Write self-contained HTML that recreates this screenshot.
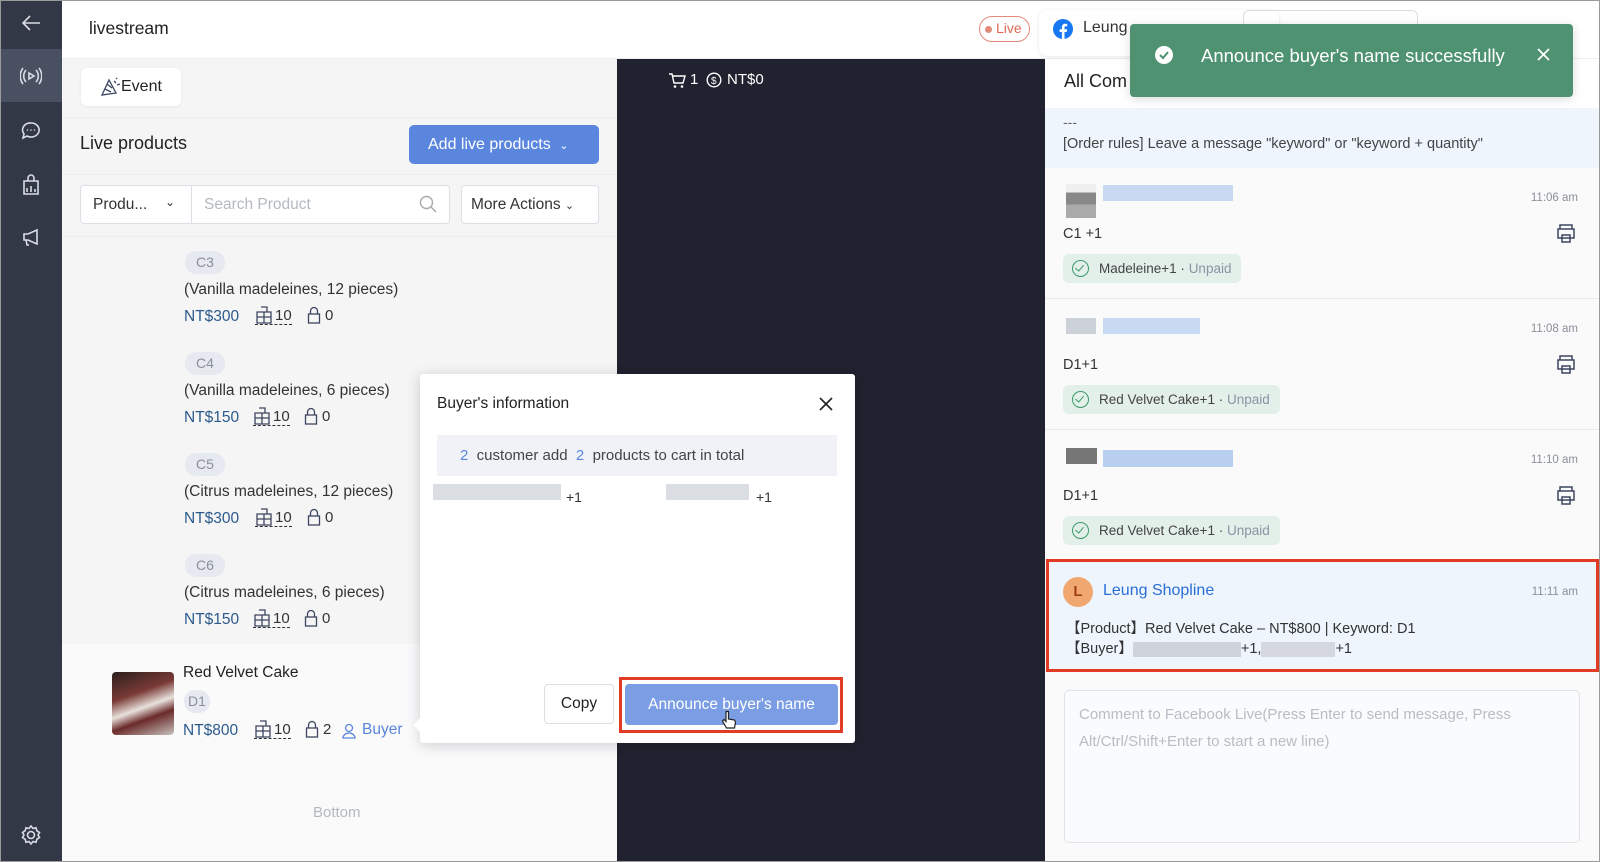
<!DOCTYPE html>
<html><head><meta charset="utf-8"><style>
*{box-sizing:border-box;margin:0;padding:0}
body{width:1600px;height:862px;overflow:hidden;font-family:"Liberation Sans",sans-serif;background:#fff;position:relative;color:#222}
.a{position:absolute}
.side{left:0;top:0;width:62px;height:862px;background:#323846}
.ico{stroke:#d8dce4;fill:none;stroke-width:1.6}
.chip{background:#e6e9ef;border-radius:11px;color:#8a8f99;font-size:14px;text-align:center;line-height:23px;width:40px;height:23px}
.txt{font-size:15.5px;color:#333}
.price{font-size:15.5px;color:#2c5a8c}
.st{font-size:15px;color:#333}
.blur{background:#d5d8dd}
.cmt{left:1045px;width:555px;height:131px;border-bottom:1px solid #e6e9ef;background:#fafafa}
.tag{background:#e3efe9;border-radius:6px;height:29px;font-size:13.5px;line-height:29px;color:#444;padding:0 10px 0 36px}
.tag i{position:absolute;left:9px;top:6px;width:17px;height:17px;border:1.6px solid #3a9a68;border-radius:50%}
.tag i:after{content:"";position:absolute;left:4px;top:2px;width:4px;height:7px;border-right:1.6px solid #3a9a68;border-bottom:1.6px solid #3a9a68;transform:rotate(40deg)}
.tag span{color:#8a94a6}
.time{font-size:11.5px;color:#8a8f99;right:22px}
</style></head><body>
<!-- sidebar -->
<div class="a side"></div>
<div class="a" style="left:0;top:49px;width:62px;height:53px;background:#485062"></div>
<svg class="a" style="left:20px;top:13px" width="22" height="20"><path class="ico" d="M20 10H3M10 3L3 10L10 17" stroke-width="2"/></svg>
<svg class="a" style="left:20px;top:67px" width="22" height="18"><path class="ico" d="M6 3a9 9 0 0 0 0 12M16 3a9 9 0 0 1 0 12M3 1a13 13 0 0 0 0 16M19 1a13 13 0 0 1 0 16M9 6v6l5-3z"/></svg>
<svg class="a" style="left:21px;top:121px" width="20" height="20"><path class="ico" d="M10 2a8 7 0 1 1-4 13l-4 2 1-4A8 7 0 0 1 10 2z"/><circle cx="6.5" cy="9" r=".8" fill="#d8dce4"/><circle cx="10" cy="9" r=".8" fill="#d8dce4"/><circle cx="13.5" cy="9" r=".8" fill="#d8dce4"/></svg>
<svg class="a" style="left:21px;top:174px" width="20" height="22"><path class="ico" d="M3 7h14v13H3zM7 7V4a3 3 0 0 1 6 0v3M6 18v-4M10 18v-6M14 18v-3"/></svg>
<svg class="a" style="left:21px;top:227px" width="20" height="20"><path class="ico" d="M3 7h4l9-4v14l-9-4H3zM5 13l1 5h2"/></svg>
<svg class="a" style="left:20px;top:824px" width="22" height="22"><circle class="ico" cx="11" cy="11" r="3.5"/><path class="ico" d="M11 2l2 2.5 3-.8.8 3 2.7 1.8-1.5 2.5 1.5 2.5-2.7 1.8-.8 3-3-.8L11 20l-2-2.5-3 .8-.8-3L2.5 13.5 4 11 2.5 8.5 5.2 6.7 6 3.7l3 .8z"/></svg>

<!-- header -->
<div class="a" style="left:62px;top:0;width:1538px;height:59px;background:#fff;border-bottom:1px solid #eee"></div>
<div class="a" style="left:89px;top:18px;font-size:17.5px;color:#222">livestream</div>
<div class="a" style="left:979px;top:16px;width:51px;height:26px;border:1.5px solid #e48a78;border-radius:13px;color:#e06a55;font-size:14px;line-height:23px;padding-left:16px">Live</div>
<div class="a" style="left:985px;top:26px;width:7px;height:7px;border-radius:50%;background:#e48a78"></div>
<div class="a" style="left:1039px;top:10px;width:240px;height:46px;background:#fff;border-radius:8px;box-shadow:0 1px 4px rgba(0,0,0,.1)"></div>
<svg class="a" style="left:1052px;top:18px" width="22" height="22"><circle cx="11" cy="11" r="10" fill="#1877f2"/><path d="M12.5 21v-7h2.3l.4-2.7h-2.7V9.6c0-.8.3-1.3 1.4-1.3h1.4V5.9a18 18 0 0 0-2-.1c-2 0-3.4 1.2-3.4 3.5v2H7.6V14h2.3v7z" fill="#fff"/></svg>
<div class="a" style="left:1083px;top:19px;font-size:16px;color:#333">Leung</div>
<div class="a" style="left:1243px;top:10px;width:175px;height:40px;border:1px solid #ddd;border-radius:6px"></div>

<!-- left panel -->
<div class="a" style="left:62px;top:59px;width:555px;height:803px;background:#f5f5f6"></div>
<div class="a" style="left:81px;top:68px;width:100px;height:38px;background:#fff;border-radius:6px;box-shadow:0 1px 3px rgba(0,0,0,.06)"></div>
<svg class="a" style="left:100px;top:77px" width="22" height="20"><path d="M2 18L9 3l7 13zM5 12l6 3M7 7l5 4M14 4l2 2M17 8l3-1M16 2l1-1" stroke="#3d4660" stroke-width="1.3" fill="none"/></svg>
<div class="a" style="left:121px;top:78px;font-size:16px;color:#222">Event</div>
<div class="a" style="left:62px;top:117px;width:555px;height:1px;background:#ececec"></div>
<div class="a" style="left:80px;top:133px;font-size:18px;color:#222">Live products</div>
<div class="a" style="left:409px;top:125px;width:190px;height:39px;background:#5a86dd;border-radius:5px;color:#fff;font-size:16px;line-height:39px;padding-left:19px">Add live products <span style="font-size:11px;margin-left:4px">&#8964;</span></div>
<div class="a" style="left:62px;top:174px;width:555px;height:1px;background:#ececec"></div>
<div class="a" style="left:80px;top:185px;width:370px;height:39px;background:#fff;border:1px solid #dcdfe6;border-radius:4px"></div>
<div class="a" style="left:191px;top:185px;width:1px;height:39px;background:#dcdfe6"></div>
<div class="a" style="left:93px;top:196px;font-size:15.5px;color:#333">Produ...</div>
<div class="a" style="left:165px;top:195px;font-size:12px;color:#333">&#8964;</div>
<div class="a" style="left:204px;top:196px;font-size:15.5px;color:#b4b8c0">Search Product</div>
<svg class="a" style="left:419px;top:195px" width="18" height="18"><circle cx="7.5" cy="7.5" r="6" stroke="#aaa" stroke-width="1.4" fill="none"/><path d="M12 12l5 5" stroke="#aaa" stroke-width="1.4"/></svg>
<div class="a" style="left:461px;top:185px;width:138px;height:39px;background:#fff;border:1px solid #dcdfe6;border-radius:4px;font-size:15.5px;line-height:37px;padding-left:9px;color:#333">More Actions <span style="font-size:11px">&#8964;</span></div>
<div class="a" style="left:62px;top:236px;width:555px;height:1px;background:#eee"></div>

<!-- product items -->
<div class="a chip" style="left:185px;top:251px">C3</div>
<div class="a txt" style="left:184px;top:281px">(Vanilla madeleines, 12 pieces)</div>
<div class="a price" style="left:184px;top:308px">NT$300</div>
<div class="a st" style="left:255px;top:307px;border-bottom:1.5px dashed #333;padding-left:20px">10</div>
<div class="a st" style="left:307px;top:307px;padding-left:18px">0</div>

<div class="a chip" style="left:185px;top:352px">C4</div>
<div class="a txt" style="left:184px;top:382px">(Vanilla madeleines, 6 pieces)</div>
<div class="a price" style="left:184px;top:409px">NT$150</div>
<div class="a st" style="left:253px;top:408px;border-bottom:1.5px dashed #333;padding-left:20px">10</div>
<div class="a st" style="left:304px;top:408px;padding-left:18px">0</div>

<div class="a chip" style="left:185px;top:453px">C5</div>
<div class="a txt" style="left:184px;top:483px">(Citrus madeleines, 12 pieces)</div>
<div class="a price" style="left:184px;top:510px">NT$300</div>
<div class="a st" style="left:255px;top:509px;border-bottom:1.5px dashed #333;padding-left:20px">10</div>
<div class="a st" style="left:307px;top:509px;padding-left:18px">0</div>

<div class="a chip" style="left:185px;top:554px">C6</div>
<div class="a txt" style="left:184px;top:584px">(Citrus madeleines, 6 pieces)</div>
<div class="a price" style="left:184px;top:611px">NT$150</div>
<div class="a st" style="left:253px;top:610px;border-bottom:1.5px dashed #333;padding-left:20px">10</div>
<div class="a st" style="left:304px;top:610px;padding-left:18px">0</div>

<div class="a" style="left:62px;top:644px;width:555px;height:218px;background:#fafafb"></div>
<div class="a" style="left:112px;top:672px;width:62px;height:63px;border-radius:4px;background:linear-gradient(160deg,#2a1f1d 0%,#7a3a36 35%,#e8e2dc 55%,#6b2a2a 70%,#c7c2bd 100%)"></div>
<div class="a" style="left:183px;top:664px;font-size:15.5px;color:#222">Red Velvet Cake</div>
<div class="a chip" style="left:184px;top:690px;width:26px">D1</div>
<div class="a price" style="left:183px;top:722px">NT$800</div>
<div class="a st" style="left:254px;top:721px;border-bottom:1.5px dashed #333;padding-left:20px">10</div>
<div class="a st" style="left:305px;top:721px;padding-left:18px">2</div>
<div class="a" style="left:341px;top:721px;font-size:15.5px;color:#5a86dd;padding-left:21px">Buyer</div>
<svg class="a" style="left:342px;top:723px" width="14" height="16"><circle cx="7" cy="5" r="3.5" stroke="#5a86dd" stroke-width="1.3" fill="none"/><path d="M1 15a6 5 0 0 1 12 0z" stroke="#5a86dd" stroke-width="1.3" fill="none"/></svg>
<div class="a" style="left:313px;top:804px;font-size:15px;color:#b4b8c0">Bottom</div>
<svg class="a" style="left:255px;top:305px" width="18" height="20"><path d="M2 7h14v11H2zM6 2h6v5M2 12h14M9 7v11" stroke="#3d4660" stroke-width="1.3" fill="none"/></svg>
<svg class="a" style="left:307px;top:306px" width="14" height="18"><rect x="1.5" y="8" width="11" height="9" stroke="#3d4660" stroke-width="1.3" fill="none"/><path d="M3.5 8V5a3.5 3.5 0 0 1 7 0v3" stroke="#3d4660" stroke-width="1.3" fill="none"/></svg>
<svg class="a" style="left:253px;top:406px" width="18" height="20"><path d="M2 7h14v11H2zM6 2h6v5M2 12h14M9 7v11" stroke="#3d4660" stroke-width="1.3" fill="none"/></svg>
<svg class="a" style="left:304px;top:407px" width="14" height="18"><rect x="1.5" y="8" width="11" height="9" stroke="#3d4660" stroke-width="1.3" fill="none"/><path d="M3.5 8V5a3.5 3.5 0 0 1 7 0v3" stroke="#3d4660" stroke-width="1.3" fill="none"/></svg>
<svg class="a" style="left:255px;top:507px" width="18" height="20"><path d="M2 7h14v11H2zM6 2h6v5M2 12h14M9 7v11" stroke="#3d4660" stroke-width="1.3" fill="none"/></svg>
<svg class="a" style="left:307px;top:508px" width="14" height="18"><rect x="1.5" y="8" width="11" height="9" stroke="#3d4660" stroke-width="1.3" fill="none"/><path d="M3.5 8V5a3.5 3.5 0 0 1 7 0v3" stroke="#3d4660" stroke-width="1.3" fill="none"/></svg>
<svg class="a" style="left:253px;top:608px" width="18" height="20"><path d="M2 7h14v11H2zM6 2h6v5M2 12h14M9 7v11" stroke="#3d4660" stroke-width="1.3" fill="none"/></svg>
<svg class="a" style="left:304px;top:609px" width="14" height="18"><rect x="1.5" y="8" width="11" height="9" stroke="#3d4660" stroke-width="1.3" fill="none"/><path d="M3.5 8V5a3.5 3.5 0 0 1 7 0v3" stroke="#3d4660" stroke-width="1.3" fill="none"/></svg>
<svg class="a" style="left:254px;top:719px" width="18" height="20"><path d="M2 7h14v11H2zM6 2h6v5M2 12h14M9 7v11" stroke="#3d4660" stroke-width="1.3" fill="none"/></svg>
<svg class="a" style="left:305px;top:720px" width="14" height="18"><rect x="1.5" y="8" width="11" height="9" stroke="#3d4660" stroke-width="1.3" fill="none"/><path d="M3.5 8V5a3.5 3.5 0 0 1 7 0v3" stroke="#3d4660" stroke-width="1.3" fill="none"/></svg>

<!-- video -->
<div class="a" style="left:617px;top:59px;width:428px;height:803px;background:#20222f"></div>
<svg class="a" style="left:668px;top:72px" width="18" height="17"><path d="M1 2h3l2 9h9l2-7H5" stroke="#fff" stroke-width="1.4" fill="none"/><circle cx="7" cy="14.5" r="1.3" fill="#fff"/><circle cx="14" cy="14.5" r="1.3" fill="#fff"/></svg>
<div class="a" style="left:690px;top:71px;font-size:15px;color:#fff">1</div>
<svg class="a" style="left:706px;top:72px" width="16" height="16"><circle cx="8" cy="8" r="6.8" stroke="#fff" stroke-width="1.4" fill="none"/><text x="5" y="12" font-size="10" fill="#fff" font-family="Liberation Sans">$</text></svg>
<div class="a" style="left:727px;top:71px;font-size:15px;color:#fff">NT$0</div>

<!-- right panel -->
<div class="a" style="left:1045px;top:59px;width:555px;height:803px;background:#fafafa"></div>
<div class="a" style="left:1045px;top:59px;width:555px;height:50px;background:#fff"></div>
<div class="a" style="left:1064px;top:71px;font-size:18px;color:#222">All Com</div>
<div class="a" style="left:1045px;top:108px;width:555px;height:60px;background:#eef5fd"></div>
<div class="a" style="left:1063px;top:114px;font-size:14px;color:#666">---</div>
<div class="a" style="left:1063px;top:136px;font-size:14.5px;color:#444">[Order rules] Leave a message "keyword" or "keyword + quantity"</div>

<div class="a cmt" style="top:168px"></div>
<div class="a blur" style="left:1066px;top:184px;width:30px;height:34px;background:linear-gradient(#f0f0f0 25%,#888 25%,#888 60%,#aaa 60%)"></div>
<div class="a" style="left:1103px;top:185px;width:130px;height:16px;background:#c8d9f2"></div>
<div class="a time" style="top:192px">11:06 am</div>
<div class="a" style="left:1063px;top:226px;font-size:14.5px;color:#333">C1 +1</div>
<div class="a tag" style="left:1063px;top:254px"><i></i>Madeleine+1 · <span>Unpaid</span></div>

<div class="a cmt" style="top:299px"></div>
<div class="a" style="left:1066px;top:318px;width:30px;height:16px;background:#cdd1d8"></div>
<div class="a" style="left:1103px;top:318px;width:97px;height:16px;background:#c8d9f2"></div>
<div class="a time" style="top:323px">11:08 am</div>
<div class="a" style="left:1063px;top:357px;font-size:14.5px;color:#333">D1+1</div>
<div class="a tag" style="left:1063px;top:385px"><i></i>Red Velvet Cake+1 · <span>Unpaid</span></div>

<div class="a cmt" style="top:430px"></div>
<div class="a" style="left:1066px;top:448px;width:31px;height:16px;background:#777"></div>
<div class="a" style="left:1103px;top:450px;width:130px;height:17px;background:#b9cfef"></div>
<div class="a time" style="top:454px">11:10 am</div>
<div class="a" style="left:1063px;top:488px;font-size:14.5px;color:#333">D1+1</div>
<div class="a tag" style="left:1063px;top:516px"><i></i>Red Velvet Cake+1 · <span>Unpaid</span></div>

<svg class="a" style="left:1555px;top:223px" width="22" height="22"><g stroke="#3d4660" stroke-width="1.5" fill="none"><path d="M5 6V2h12v4M3 6h16v9H3zM7 12h8v7H7z"/></g></svg>
<svg class="a" style="left:1555px;top:354px" width="22" height="22"><g stroke="#3d4660" stroke-width="1.5" fill="none"><path d="M5 6V2h12v4M3 6h16v9H3zM7 12h8v7H7z"/></g></svg>
<svg class="a" style="left:1555px;top:485px" width="22" height="22"><g stroke="#3d4660" stroke-width="1.5" fill="none"><path d="M5 6V2h12v4M3 6h16v9H3zM7 12h8v7H7z"/></g></svg>

<div class="a" style="left:1046px;top:559px;width:553px;height:113px;background:#eef5fd;border:3px solid #e23b25"></div>
<div class="a" style="left:1063px;top:577px;width:30px;height:30px;border-radius:50%;background:#f0a870;color:#a04018;font-weight:bold;font-size:15px;text-align:center;line-height:30px">L</div>
<div class="a" style="left:1103px;top:582px;font-size:16px;color:#2a6fd6">Leung Shopline</div>
<div class="a time" style="top:586px">11:11 am</div>
<div class="a" style="left:1066px;top:617px;font-size:14.5px;color:#333;font-family:'Liberation Sans','Noto Sans CJK SC',sans-serif">【Product】Red Velvet Cake – NT$800 | Keyword: D1</div>
<div class="a" style="left:1066px;top:637px;font-size:14.5px;color:#333;font-family:'Liberation Sans','Noto Sans CJK SC',sans-serif">【Buyer】<span style="display:inline-block;width:108px;height:15px;background:#cfd4db;vertical-align:middle"></span>+1,<span style="display:inline-block;width:74px;height:15px;background:#d5d9df;vertical-align:middle"></span>+1</div>
<div class="a" style="left:1064px;top:690px;width:516px;height:153px;border:1px solid #dfe2e8;border-radius:5px;background:#fafbfc;padding:10px 14px;font-size:15px;line-height:27px;color:#b8bcc4">Comment to Facebook Live(Press Enter to send message, Press Alt/Ctrl/Shift+Enter to start a new line)</div>

<!-- modal -->
<div class="a" style="left:420px;top:374px;width:435px;height:369px;background:#fff;border-radius:3px;box-shadow:0 2px 14px rgba(0,0,0,.18)"></div>
<div class="a" style="left:413px;top:718px;width:0;height:0;border-top:7px solid transparent;border-bottom:7px solid transparent;border-right:7px solid #fff"></div>
<div class="a" style="left:437px;top:395px;font-size:15.5px;color:#222">Buyer's information</div>
<svg class="a" style="left:819px;top:397px" width="14" height="14"><path d="M1 1l12 12M13 1L1 13" stroke="#222" stroke-width="1.6"/></svg>
<div class="a" style="left:437px;top:435px;width:400px;height:41px;background:#f0f2f7;font-size:15px;line-height:41px;color:#444;padding-left:23px"><span style="color:#5a86dd">2</span>&nbsp; customer add &nbsp;<span style="color:#5a86dd">2</span>&nbsp; products to cart in total</div>
<div class="a" style="left:433px;top:484px;width:128px;height:16px;background:#dadde2"></div>
<div class="a" style="left:566px;top:489px;font-size:14px;color:#333">+1</div>
<div class="a" style="left:666px;top:484px;width:83px;height:16px;background:#dadde2"></div>
<div class="a" style="left:756px;top:489px;font-size:14px;color:#333">+1</div>
<div class="a" style="left:544px;top:684px;width:70px;height:40px;border:1px solid #dcdfe6;border-radius:4px;font-size:15.5px;line-height:38px;text-align:center;color:#222">Copy</div>
<div class="a" style="left:619px;top:677px;width:224px;height:56px;border:3px solid #e23b25"></div>
<div class="a" style="left:625px;top:684px;width:213px;height:41px;background:#7a9de3;border-radius:4px;font-size:15.5px;line-height:41px;text-align:center;color:#fff">Announce buyer's name</div>
<svg class="a" style="left:721px;top:710px" width="16" height="20"><path d="M5 1.5v10l-2-2-1.5 1.5 4 7h8l1-6-1-2-6-1V1.5z" fill="#fff" stroke="#222" stroke-width="1.2"/></svg>

<!-- toast -->
<div class="a" style="left:1130px;top:24px;width:443px;height:73px;background:#4e9272;border-radius:4px;box-shadow:0 2px 10px rgba(0,0,0,.15)"></div>
<div class="a" style="left:1155px;top:46px;width:18px;height:18px;border-radius:50%;background:#fff"></div>
<svg class="a" style="left:1158px;top:49px" width="12" height="12"><path d="M2 6l3 3 5-6" stroke="#4e9272" stroke-width="2" fill="none"/></svg>
<div class="a" style="left:1201px;top:45px;font-size:18.5px;color:#fff">Announce buyer's name successfully</div>
<svg class="a" style="left:1537px;top:48px" width="13" height="13"><path d="M1 1l11 11M12 1L1 12" stroke="#fff" stroke-width="1.8"/></svg>

<!-- outer frame -->
<div class="a" style="left:0;top:0;width:1600px;height:862px;border:1px solid #9a9a9a;pointer-events:none"></div>
</body></html>
